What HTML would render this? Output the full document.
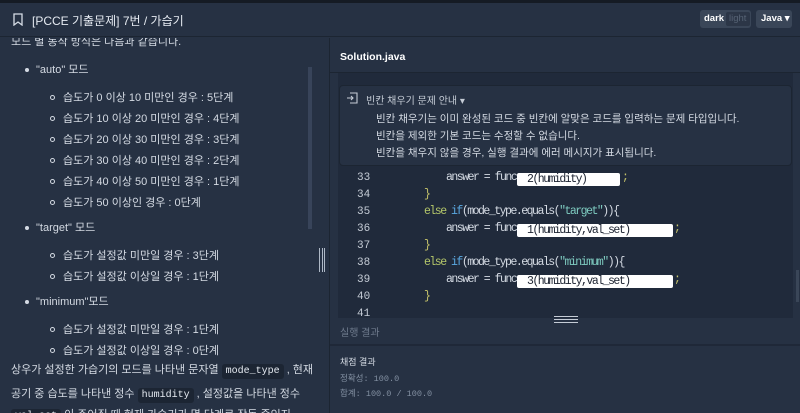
<!DOCTYPE html>
<html><head><meta charset="utf-8"><style>
*{margin:0;padding:0;box-sizing:border-box}
html,body{width:800px;height:413px;overflow:hidden}
body{background:#263143;font-family:"Liberation Sans","Noto Sans CJK KR",sans-serif;color:#d7dde6;position:relative}
.top{position:absolute;left:0;top:0;width:800px;height:3px;background:#151b24}
.hdr{position:absolute;left:0;top:3px;width:800px;height:34px;background:#263143;border-bottom:1px solid #1c2532}
.hdr .t{position:absolute;left:32px;top:9px;font-size:12px;color:#e6ebf2}
.left{position:absolute;left:0;top:38px;width:329px;height:375px;background:#263143;overflow:hidden;font-size:11px;color:#d4dae3}
.abs{position:absolute;white-space:nowrap}
.code{font-family:"Liberation Mono",monospace;background:#1c2533;border-radius:3px;padding:2px 4px;font-size:10px;color:#e6ebf2}
.dot{position:absolute;width:4px;height:4px;border-radius:2px;background:#d4dae3}
.circ{position:absolute;width:5px;height:5px;border-radius:3px;border:1px solid #d4dae3}
.right{position:absolute;left:329px;top:38px;width:471px;height:375px;background:#263143;border-left:1px solid #1c2532}
.ed{position:absolute;left:338px;top:73px;width:455px;height:245px;background:#202a3b}
.mono{font-family:"Liberation Mono",monospace;font-size:11.5px;letter-spacing:-1.5px}
.ln{position:absolute;left:357px;color:#c5ccd6;font-family:"Liberation Mono",monospace;font-size:11px}
.blank{position:absolute;left:517px;height:13px;background:#fff;border-radius:2px;color:#1b2230;padding-left:10px;line-height:13px}
</style></head><body>
<div class="top"></div>
<div class="hdr">
<svg style="position:absolute;left:13px;top:10px" width="10" height="13" viewBox="0 0 10 13"><path d="M1 1h8v11l-4-3-4 3z" fill="none" stroke="#d7dde6" stroke-width="1.3"/></svg>
<div class="t">[PCCE 기출문제] 7번 / 가습기</div>
<div style="position:absolute;left:700px;top:7px;width:51px;height:18px;background:#3a4658;border-radius:3px"></div>
<div style="position:absolute;left:726px;top:9px;width:24px;height:14px;background:#2c3647;border-radius:2px"></div>
<div class="abs" style="left:704px;top:10px;font-size:9.5px;font-weight:bold;color:#fff">dark</div>
<div class="abs" style="left:729px;top:10px;font-size:9.5px;color:#566274">light</div>
<div style="position:absolute;left:756px;top:7px;width:36px;height:18px;background:#3a4658;border-radius:3px"></div>
<div class="abs" style="left:761px;top:10px;font-size:9.5px;font-weight:bold;color:#fff">Java ▾</div>
</div>
<div class="left">
<div class="abs" style="left:11px;top:-5px">모드 별 동작 방식은 다음과 같습니다.</div>
<div class="dot" style="left:25px;top:30px"></div><div class="abs" style="left:36px;top:23px">"auto" 모드</div>
<div class="circ" style="left:50px;top:57px"></div><div class="abs" style="left:63px;top:51px">습도가 0 이상 10 미만인 경우 : 5단계</div>
<div class="circ" style="left:50px;top:78px"></div><div class="abs" style="left:63px;top:72px">습도가 10 이상 20 미만인 경우 : 4단계</div>
<div class="circ" style="left:50px;top:99px"></div><div class="abs" style="left:63px;top:93px">습도가 20 이상 30 미만인 경우 : 3단계</div>
<div class="circ" style="left:50px;top:120px"></div><div class="abs" style="left:63px;top:114px">습도가 30 이상 40 미만인 경우 : 2단계</div>
<div class="circ" style="left:50px;top:141px"></div><div class="abs" style="left:63px;top:135px">습도가 40 이상 50 미만인 경우 : 1단계</div>
<div class="circ" style="left:50px;top:162px"></div><div class="abs" style="left:63px;top:156px">습도가 50 이상인 경우 : 0단계</div>
<div class="dot" style="left:25px;top:188px"></div><div class="abs" style="left:36px;top:181px">"target" 모드</div>
<div class="circ" style="left:50px;top:215px"></div><div class="abs" style="left:63px;top:209px">습도가 설정값 미만일 경우 : 3단계</div>
<div class="circ" style="left:50px;top:236px"></div><div class="abs" style="left:63px;top:230px">습도가 설정값 이상일 경우 : 1단계</div>
<div class="dot" style="left:25px;top:262px"></div><div class="abs" style="left:36px;top:255px">"minimum"모드</div>
<div class="circ" style="left:50px;top:289px"></div><div class="abs" style="left:63px;top:283px">습도가 설정값 미만일 경우 : 1단계</div>
<div class="circ" style="left:50px;top:310px"></div><div class="abs" style="left:63px;top:304px">습도가 설정값 이상일 경우 : 0단계</div>
<div class="abs" style="left:11px;top:323px">상우가 설정한 가습기의 모드를 나타낸 문자열 <span class="code">mode_type</span> , 현재</div>
<div class="abs" style="left:11px;top:347px">공기 중 습도를 나타낸 정수 <span class="code">humidity</span> , 설정값을 나타낸 정수</div>
<div class="abs" style="left:11px;top:368px"><span class="code">val_set</span> 이 주어질 때 현재 가습기가 몇 단계로 작동 중인지</div>
<div style="position:absolute;left:308px;top:29px;width:4px;height:162px;background:#38445a"></div>
<div style="position:absolute;left:319px;top:210px;width:6px;height:24px;border-left:1px solid #aeb8c6;border-right:1px solid #aeb8c6"><div style="margin-left:2px;width:1px;height:24px;background:#aeb8c6"></div></div>
</div>
<div class="right">
<div style="position:absolute;left:0;top:0;width:471px;height:35px;border-bottom:1px solid #1c2532"></div>
<div class="abs" style="left:10px;top:13px;font-size:10.5px;font-weight:bold;color:#fff">Solution.java</div>
</div>
<div class="ed"></div>
<div style="position:absolute;left:339px;top:85px;width:453px;height:81px;background:#263143;border:1px solid #1c2532;border-radius:4px"></div>
<svg style="position:absolute;left:346px;top:92px" width="12" height="12" viewBox="0 0 12 12" fill="none" stroke="#c5ccd6" stroke-width="1.1"><path d="M4 1h7v10H4M1 6h6M5 4l2 2-2 2"/></svg>
<div class="abs" style="left:366px;top:92px;font-size:10px;color:#c5ccd6">빈칸 채우기 문제 안내 ▾</div>
<div class="abs" style="left:376px;top:111px;font-size:10.5px;color:#d4dae3;line-height:17px">빈칸 채우기는 이미 완성된 코드 중 빈칸에 알맞은 코드를 입력하는 문제 타입입니다.<br>빈칸을 제외한 기본 코드는 수정할 수 없습니다.<br>빈칸을 채우지 않을 경우, 실행 결과에 에러 메시지가 표시됩니다.</div>
<div class="ln" style="top:172px">33</div><div class="ln" style="top:189px">34</div><div class="ln" style="top:206px">35</div><div class="ln" style="top:223px">36</div><div class="ln" style="top:240px">37</div><div class="ln" style="top:257px">38</div><div class="ln" style="top:274px">39</div><div class="ln" style="top:291px">40</div><div class="ln" style="top:308px;height:8px;overflow:hidden">41</div>
<div class="abs mono" style="left:446px;top:171px;color:#d4dae3">answer = func</div><div class="blank mono" style="top:173px;width:103px">2(humidity)</div><div class="abs mono" style="left:622px;top:171px;color:#c5c36a">;</div>
<div class="abs mono" style="left:424px;top:188px;color:#c5c36a">}</div>
<div class="abs mono" style="left:424px;top:205px;color:#d4dae3"><span style="color:#b5c76a">else</span> <span style="color:#5aa8e0">if</span>(mode_type.equals(<span style="color:#7ecbc0">"target"</span>)){</div>
<div class="abs mono" style="left:446px;top:222px;color:#d4dae3">answer = func</div><div class="blank mono" style="top:224px;width:156px">1(humidity,val_set)</div><div class="abs mono" style="left:674px;top:222px;color:#c5c36a">;</div>
<div class="abs mono" style="left:424px;top:239px;color:#c5c36a">}</div>
<div class="abs mono" style="left:424px;top:256px;color:#d4dae3"><span style="color:#b5c76a">else</span> <span style="color:#5aa8e0">if</span>(mode_type.equals(<span style="color:#7ecbc0">"minimum"</span>)){</div>
<div class="abs mono" style="left:446px;top:273px;color:#d4dae3">answer = func</div><div class="blank mono" style="top:275px;width:156px">3(humidity,val_set)</div><div class="abs mono" style="left:674px;top:273px;color:#c5c36a">;</div>
<div class="abs mono" style="left:424px;top:290px;color:#c5c36a">}</div>
<div style="position:absolute;left:796px;top:270px;width:3px;height:32px;background:#3a4658"></div>
<div style="position:absolute;left:554px;top:316px;width:24px;height:7px;border-top:1px solid #c5ccd6;border-bottom:1px solid #c5ccd6"><div style="margin-top:2px;height:1px;background:#c5ccd6"></div></div>
<div class="abs" style="left:340px;top:324px;font-size:10px;color:#6f7b8d">실행 결과</div>
<div style="position:absolute;left:330px;top:344px;width:470px;height:2px;background:#1f2838"></div>
<div class="abs" style="left:340px;top:355px;font-size:9px;color:#d4dae3">채점 결과</div>
<div class="abs" style="left:340px;top:372px;font-size:8.5px;color:#8390a2;font-family:'Liberation Mono','Noto Sans CJK KR',monospace">정확성: 100.0</div>
<div class="abs" style="left:340px;top:387px;font-size:8.5px;color:#8390a2;font-family:'Liberation Mono','Noto Sans CJK KR',monospace">합계: 100.0 / 100.0</div>
</body></html>
